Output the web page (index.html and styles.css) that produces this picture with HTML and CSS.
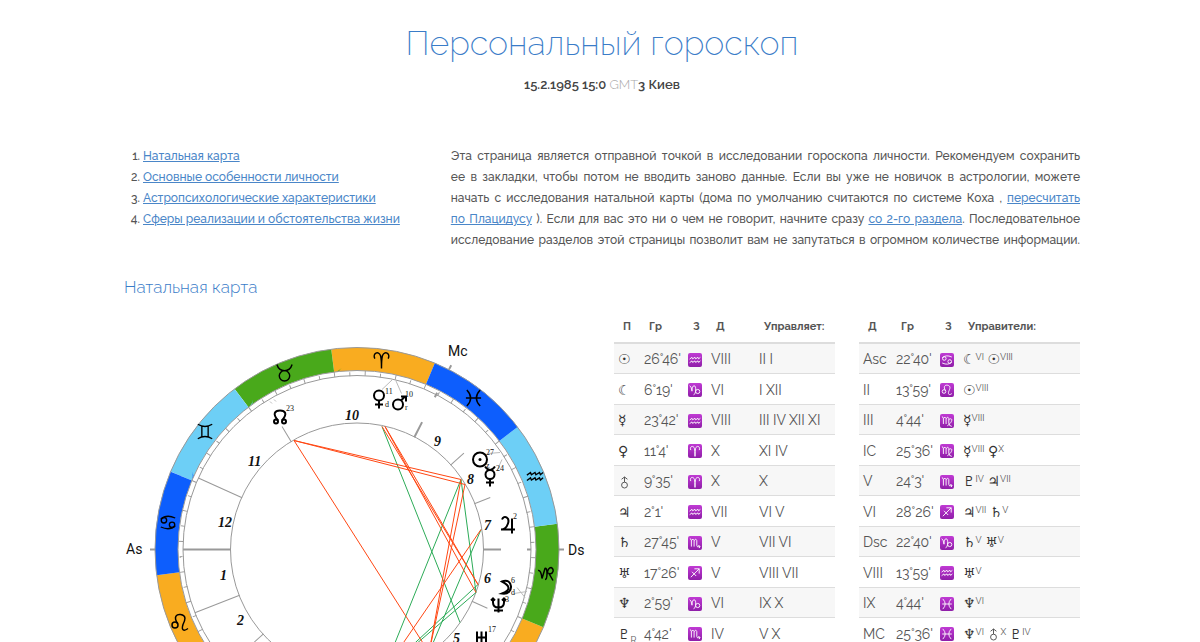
FILE: index.html
```html
<!DOCTYPE html>
<html lang="ru">
<head>
    <meta charset="UTF-8">
    <meta name="viewport" content="width=device-width, initial-scale=1.0">
    <title>Персональный гороскоп</title>
    <link rel="stylesheet" href="styles.css">
</head>
<body>
    <!-- Символы знаков и планет -->
    <svg class="sprite" aria-hidden="true">
        <symbol id="aries" viewBox="0 0 20 20"><path d="M3 8.500C0 3 7-.5 9 5.500Q10 9 10 19Q10 9 11 5.500C13-.5 20 3 17 8.500"/></symbol>
        <symbol id="taurus" viewBox="0 0 20 20"><path d="M2 1Q4 7.500 10 7.500T18 1"/><circle cx="10" cy="13" r="5.500"/></symbol>
        <symbol id="gemini" viewBox="0 0 20 20"><path d="M2 2Q10 7 18 2M2 18Q10 13 18 18M6.500 4.500v11M13.500 4.500v11"/></symbol>
        <symbol id="cancer" viewBox="0 0 20 20"><path d="M2 6.500Q8 .5 18 5M18 13.500Q12 19.500 2 15"/><circle cx="5.500" cy="7.500" r="3"/><circle cx="14.500" cy="12.500" r="3"/></symbol>
        <symbol id="leo" viewBox="0 0 20 20"><circle cx="5" cy="12.500" r="3"/><path d="M7.500 11C3 4 7 1.500 10.500 2C17 3 15 8 13 12C11 18 14 19 18 16"/></symbol>
        <symbol id="virgo" viewBox="0 0 20 20"><path d="M1.500 3Q4 3 4 6v9M4 6q3-5 4.500 0v9M8.500 6q3-5 4.500 0v8q0 4 5 5M13 8c5-5 9 2-2.500 10"/></symbol>
        <symbol id="scorpio" viewBox="0 0 20 20"><path d="M1.500 3Q4 3 4 6v10M4 6q3-5 4.500 0v10M8.500 6q3-5 4.500 0v8q0 4 5 2M15.500 14l3 1.500-1.500 3"/></symbol>
        <symbol id="sagittarius" viewBox="0 0 20 20"><path d="M3 17L17 3M9 3h8v8M5 8l7 7"/></symbol>
        <symbol id="capricorn" viewBox="0 0 20 20"><path d="M1 3Q4 3 5 12Q5 3 8.500 3T11 12Q11 17 7.500 18"/><circle cx="14.500" cy="12.500" r="3.500"/></symbol>
        <symbol id="aquarius" viewBox="0 0 20 20"><path d="M1 8.500l4-3 1 2.500 4-2.500 1 2.500 4-2.500 1 2.500 3-2.500M1 14.500l4-3 1 2.500 4-2.500 1 2.500 4-2.500 1 2.500 3-2.500"/></symbol>
        <symbol id="pisces" viewBox="0 0 20 20"><path d="M3 1.500Q11 10 3 18.500M17 1.500Q9 10 17 18.500M2 10h16"/></symbol>
        <symbol id="mars-up" viewBox="0 0 20 20"><circle cx="10" cy="14" r="4.500"/><path d="M10 9.500V1.500M5.500 5L10 1.500 14.500 5"/></symbol>
    </svg>

    <header>
        <h1>Персональный гороскоп</h1>
        <p class="birth">15.2.1985 15:0 <span>GMT</span>3 Киев</p>
    </header>

    <div class="container">
        <div class="intro">
            <ol class="contents">
                <li><a href="#natal">Натальная карта</a></li>
                <li><a href="#features">Основные особенности личности</a></li>
                <li><a href="#psychology">Астропсихологические характеристики</a></li>
                <li><a href="#spheres">Сферы реализации и обстоятельства жизни</a></li>
            </ol>
            <p class="about">
                Эта страница является отправной точкой в исследовании гороскопа личности. Рекомендуем сохранить<br>
                ее в закладки, чтобы потом не вводить заново данные. Если вы уже не новичок в астрологии, можете<br>
                начать с исследования натальной карты (дома по умолчанию считаются по системе Коха , <a href="#placidus">пересчитать<br>
                по Плацидусу</a> ). Если для вас это ни о чем не говорит, начните сразу <a href="#features">со 2-го раздела</a>. Последовательное<br>
                исследование разделов этой страницы позволит вам не запутаться в огромном количестве информации.
            </p>
        </div>

        <h2 id="natal">Натальная карта</h2>

        <div class="natal">
            <svg class="chart" viewBox="-233 -229.5 466 460" role="img" aria-label="Натальная карта">
                <!-- Кольцо знаков: по три знака каждой стихии -->
                <g class="ring">
                    <circle class="fire" r="190.500" pathLength="360" transform="rotate(-157.33)"/>
                    <circle class="earth" r="190.500" pathLength="360" transform="rotate(-187.33)"/>
                    <circle class="air" r="190.500" pathLength="360" transform="rotate(-217.33)"/>
                    <circle class="water" r="190.500" pathLength="360" transform="rotate(-247.33)"/>
                </g>
                <g class="grid">
                    <circle r="202"/>
                    <circle r="179"/>
                    <circle r="174"/>
                    <circle r="126.500"/>
                    <circle class="ticks-10" r="176.500" pathLength="360" transform="rotate(-7.48)"/>
                    <circle class="ticks-5" r="175.500" pathLength="360" transform="rotate(-2.48)"/>
                </g>

                <!-- Куспиды домов -->
                <g class="cusps">
                    <path class="axis" d="M126 0H144M170 0H174M202 0H207"/>
                    <path d="M126 0H143" transform="rotate(-21.3)"/>
                    <path d="M126 0H144" transform="rotate(-42.06)"/>
                    <path class="axis" d="M126 0H143M171 0H176M202 0H207" transform="rotate(-62.93)"/>
                    <path d="M126 0H144" transform="rotate(-121.38)"/>
                    <path d="M126 0H174" transform="rotate(-155.76)"/>
                    <path class="axis" d="M126 0H174M202 0H207" transform="rotate(180)"/>
                    <path d="M126 0H174" transform="rotate(-201.3)"/>
                    <path d="M126 0H174" transform="rotate(-222.06)"/>
                    <path class="axis" d="M126 0H174M202 0H207" transform="rotate(-242.93)"/>
                    <path d="M126 0H174" transform="rotate(-301.38)"/>
                    <path d="M126 0H143" transform="rotate(-335.76)"/>
                </g>
                <path class="leaders" d="M35-169.500L25-160M39-168.500L44.500-156M131-96L143-97M145-90L140-79M160 38L168 48M157 44L170 42M-87-148l2 2M-83-150l2 2"/>

                <!-- Аспекты -->
                <path class="good" d="M25-123L103 73M104-70L26 123M104-70L119 43M124-20L72 103M121 35L26 123M119 43L26 123"/>
                <path class="bad" d="M-63-109L104-70M-63-109L108-65M-63-109L72 103M25-123L121 35M28-123L121 35M28-123L119 43M104-70L72 103M108-65L72 103M124-20L26 123"/>

                <g class="signs">
                    <use href="#aries" x="15" y="-199" width="19" height="19"/>
                    <use href="#taurus" x="-82" y="-186" width="19" height="19"/>
                    <use href="#gemini" x="-161" y="-127" width="18" height="18"/>
                    <use href="#cancer" x="-9" y="-9" width="18" height="18" transform="translate(-189 -27)"/>
                    <use href="#leo" x="-9" y="-9" width="20" height="20" transform="translate(-178 72)"/>
                    <use href="#pisces" x="107" y="-161" width="19" height="19"/>
                    <use href="#aquarius" x="169" y="-82" width="18" height="18"/>
                    <path d="M181 21Q184 20 185 29L188 19Q190 18 190 24T188 30M190 25Q191 18 194 18A3 3 0 1 1 192 24L196 31"/>
                </g>

                <!-- Планеты -->
                <g class="planets">
                    <circle cx="22" cy="-154" r="5"/><path d="M22-149v8M18-145h8"/>
                    <circle cx="41" cy="-145" r="5"/><path d="M44-149l4-4M44-153h5v5"/>
                    <circle cx="123" cy="-90" r="7"/><circle class="dot" cx="123" cy="-90" r="1.500"/>
                    <circle cx="133" cy="-75" r="4.500"/><path d="M128-83q5 7 10 0M133-70v7M129-67h8"/>
                    <path d="M145-30C147-35 153-32 151-26Q149-20 144-20H158M155-31V-16"/>
                    <path d="M145 32C156 27 158 46 145 44Q158 39 145 32Z"/>
                    <path d="M136 49v4q0 5 5.500 5t5.500-5v-4M141.500 49v14M137 61h9M134 51l2-2 2 2M145 51l2-2 2 2"/>
                    <path d="M120 82v11M129 82v11M120 88h9M124.500 82v15"/>
                    <path d="M-79-129C-85-136-82-139-77-139S-69-136-75-129"/><circle cx="-81" cy="-128" r="2"/><circle cx="-73" cy="-128" r="2"/>
                </g>

                <g class="degrees">
                    <text x="28" y="-156">11</text>
                    <text x="28" y="-143">d</text>
                    <text x="48" y="-153">10</text>
                    <text x="48" y="-140">r</text>
                    <text x="129" y="-95">27</text>
                    <text x="129" y="-82">z</text>
                    <text x="139" y="-79">24</text>
                    <text x="156" y="-31">2</text>
                    <text x="154" y="33">6</text>
                    <text x="154" y="45">d</text>
                    <text x="148" y="52">3</text>
                    <text x="131" y="82">17</text>
                    <text x="-71" y="-139">23</text>
                </g>

                <g class="houses">
                    <text x="-137" y="30">1</text>
                    <text x="-120" y="75">2</text>
                    <text x="96" y="93">5</text>
                    <text x="127" y="33">6</text>
                    <text x="127" y="-20">7</text>
                    <text x="110" y="-66">8</text>
                    <text x="77" y="-104">9</text>
                    <text x="-12" y="-130">10</text>
                    <text x="-109" y="-84">11</text>
                    <text x="-139" y="-23">12</text>
                </g>

                <g class="angles">
                    <text x="-231" y="4">As</text>
                    <text x="211" y="5">Ds</text>
                    <text x="91" y="-194">Mc</text>
                </g>
            </svg>

            <div class="tables">
                <table class="planets-table">
                    <thead>
                        <tr><th>П</th><th>Гр</th><th>З</th><th>Д</th><th>Управляет:</th></tr>
                    </thead>
                    <tbody>
                        <tr><td><i>☉</i></td><td>26°46'</td><td><svg class="sign"><use href="#aquarius"/></svg></td><td>VIII</td><td>II I</td></tr>
                        <tr><td><i>☾</i></td><td>6°19'</td><td><svg class="sign"><use href="#capricorn"/></svg></td><td>VI</td><td>I XII</td></tr>
                        <tr><td><i>☿</i></td><td>23°42'</td><td><svg class="sign"><use href="#aquarius"/></svg></td><td>VIII</td><td>III IV XII XI</td></tr>
                        <tr><td><i>♀</i></td><td>11°4'</td><td><svg class="sign"><use href="#aries"/></svg></td><td>X</td><td>XI IV</td></tr>
                        <tr><td><svg class="mars"><use href="#mars-up"/></svg></td><td>9°35'</td><td><svg class="sign"><use href="#aries"/></svg></td><td>X</td><td>X</td></tr>
                        <tr><td><i>♃</i></td><td>2°1'</td><td><svg class="sign"><use href="#aquarius"/></svg></td><td>VII</td><td>VI V</td></tr>
                        <tr><td><i>♄</i></td><td>27°45'</td><td><svg class="sign"><use href="#scorpio"/></svg></td><td>V</td><td>VII VI</td></tr>
                        <tr><td><i>♅</i></td><td>17°26'</td><td><svg class="sign"><use href="#sagittarius"/></svg></td><td>V</td><td>VIII VII</td></tr>
                        <tr><td><i>♆</i></td><td>2°59'</td><td><svg class="sign"><use href="#capricorn"/></svg></td><td>VI</td><td>IX X</td></tr>
                        <tr><td><i>♇</i><sub>R</sub></td><td>4°42'</td><td><svg class="sign"><use href="#scorpio"/></svg></td><td>IV</td><td>V X</td></tr>
                    </tbody>
                </table>

                <table class="houses-table">
                    <thead>
                        <tr><th>Д</th><th>Гр</th><th>З</th><th>Управители:</th></tr>
                    </thead>
                    <tbody>
                        <tr><td>Asc</td><td>22°40'</td><td><svg class="sign"><use href="#cancer"/></svg></td><td><i>☾</i><sup>VI</sup> <i>☉</i><sup>VIII</sup></td></tr>
                        <tr><td>II</td><td>13°59'</td><td><svg class="sign"><use href="#leo"/></svg></td><td><i>☉</i><sup>VIII</sup></td></tr>
                        <tr><td>III</td><td>4°44'</td><td><svg class="sign"><use href="#virgo"/></svg></td><td><i>☿</i><sup>VIII</sup></td></tr>
                        <tr><td>IC</td><td>25°36'</td><td><svg class="sign"><use href="#virgo"/></svg></td><td><i>☿</i><sup>VIII</sup> <i>♀</i><sup>X</sup></td></tr>
                        <tr><td>V</td><td>24°3'</td><td><svg class="sign"><use href="#scorpio"/></svg></td><td><i>♇</i><sup>IV</sup> <i>♃</i><sup>VII</sup></td></tr>
                        <tr><td>VI</td><td>28°26'</td><td><svg class="sign"><use href="#sagittarius"/></svg></td><td><i>♃</i><sup>VII</sup> <i>♄</i><sup>V</sup></td></tr>
                        <tr><td>Dsc</td><td>22°40'</td><td><svg class="sign"><use href="#capricorn"/></svg></td><td><i>♄</i><sup>V</sup> <i>♅</i><sup>V</sup></td></tr>
                        <tr><td>VIII</td><td>13°59'</td><td><svg class="sign"><use href="#aquarius"/></svg></td><td><i>♅</i><sup>V</sup></td></tr>
                        <tr><td>IX</td><td>4°44'</td><td><svg class="sign"><use href="#pisces"/></svg></td><td><i>♆</i><sup>VI</sup></td></tr>
                        <tr><td>MC</td><td>25°36'</td><td><svg class="sign"><use href="#pisces"/></svg></td><td><i>♆</i><sup>VI</sup> <svg class="mars"><use href="#mars-up"/></svg><sup>X</sup> <i>♇</i><sup>IV</sup></td></tr>
                    </tbody>
                </table>
            </div>
        </div>
    </div>
</body>
</html>
```
FILE: styles.css
```css
body {
    margin: 0;
    font-family: Raleway, Lato, "Open Sans", sans-serif;
    font-size: 12px;
    line-height: 21px;
    font-weight: 500;
    font-variant-numeric: oldstyle-nums;
    color: #555;
    background-color: #fff;
}

a {
    color: #4a86c8;
    text-decoration: underline;
}

.sprite {
    display: none;
}

symbol {
    fill: none;
    stroke: currentColor;
    overflow: visible;
}

header {
    text-align: center;
    padding: 19px 120px 0 124px;
}

h1 {
    margin: 0;
    font-size: 34px;
    line-height: 48px;
    font-weight: 200;
    color: #3a7cc8;
}

.birth {
    margin: 7px 0 0;
    font-size: 13px;
    font-weight: 600;
    color: #444;
}

.birth span {
    font-weight: 300;
    color: #aaa;
}

.container {
    margin-top: 51px;
    padding: 0 120px 0 124px;
}

.intro {
    display: grid;
    grid-template-columns: 30% 1fr;
    gap: 40px;
}

.contents {
    margin: 0;
    padding-left: 19px;
    white-space: nowrap;
}

.about {
    margin: 0;
    text-align: justify;
    text-align-last: justify;
}

h2 {
    margin: 21px 0 0;
    font-size: 17px;
    line-height: 30px;
    font-weight: 300;
    color: #3a7cc8;
}

.natal {
    display: grid;
    grid-template-columns: 1fr 1fr;
    gap: 24px;
    align-items: start;
    padding-top: 11px;
}

/* Карта */
.chart {
    width: 100%;
    margin-top: 7px;
}

.chart circle,
.chart path {
    fill: none;
}

.ring circle {
    stroke-width: 23px;
    stroke-dasharray: 30 90;
    stroke-dashoffset: -60;
}

.fire {
    stroke: #f9ac20;
}

.earth {
    stroke: #49a91b;
}

.air {
    stroke: #6dcff6;
}

.water {
    stroke: #0d5efd;
}

.grid,
.cusps {
    stroke: #999;
}

.leaders {
    stroke: #bbb;
}

.axis {
    stroke-width: 2px;
}

.ticks-10 {
    stroke-width: 5px;
    stroke-dasharray: 0.3 9.7;
}

.ticks-5 {
    stroke-width: 4px;
    stroke-dasharray: 0.3 9.7;
}

.good {
    stroke: #2cab57;
}

.bad {
    stroke: #ff4713;
}

.signs {
    color: #000;
    stroke: #000;
    stroke-width: 1.5px;
}

.planets {
    stroke: #000;
    stroke-width: 2px;
}

.chart .dot {
    fill: #000;
    stroke: none;
}

.chart text {
    fill: #111;
}

.degrees {
    font-family: "Liberation Serif", serif;
    font-size: 8px;
    font-variant-numeric: normal;
}

.houses {
    font-family: "Liberation Serif", serif;
    font-size: 14px;
    font-weight: bold;
    font-style: italic;
    font-variant-numeric: normal;
}

.angles {
    font-family: Roboto, sans-serif;
    font-size: 14px;
    font-weight: normal;
}

/* Таблицы */
.tables {
    display: grid;
    grid-template-columns: 1fr 1fr;
    gap: 24px;
    align-items: start;
}

table {
    width: 100%;
    table-layout: fixed;
    border-collapse: collapse;
    white-space: nowrap;
}

th {
    height: 26px;
    padding: 0 0 3px 9px;
    border-bottom: 2px solid #ddd;
    font-size: 11px;
    text-align: left;
}

td {
    height: 28px;
    padding: 2px 0 0 4px;
    border-bottom: 1px solid #ddd;
    font-size: 14px;
    font-weight: normal;
}

tbody tr:nth-child(odd) {
    background-color: #f7f7f7;
}

tbody tr:nth-child(odd) td {
    height: 27px;
}

.planets-table th:nth-child(1) { width: 17px; }
.planets-table th:nth-child(2) { width: 35px; }
.planets-table th:nth-child(3) { width: 14px; }
.planets-table th:nth-child(4) { width: 39px; }

.houses-table th:nth-child(1) { width: 24px; }
.houses-table th:nth-child(2) { width: 35px; }
.houses-table th:nth-child(3) { width: 14px; }

td i {
    font-family: "DejaVu Sans", sans-serif;
    font-size: 14px;
    font-style: normal;
    color: #333;
}

sup,
sub {
    font-size: 9px;
    line-height: 1;
}

sup {
    vertical-align: 4px;
}

.sign {
    display: block;
    box-sizing: border-box;
    width: 14px;
    height: 14px;
    padding: 1px;
    border-radius: 2px;
    color: #fff;
    stroke-width: 1.5px;
    background: linear-gradient(#c03ad4, #8f1ea8);
}

.mars {
    width: 13px;
    height: 13px;
    stroke-width: 1.5px;
    vertical-align: middle;
}
```
